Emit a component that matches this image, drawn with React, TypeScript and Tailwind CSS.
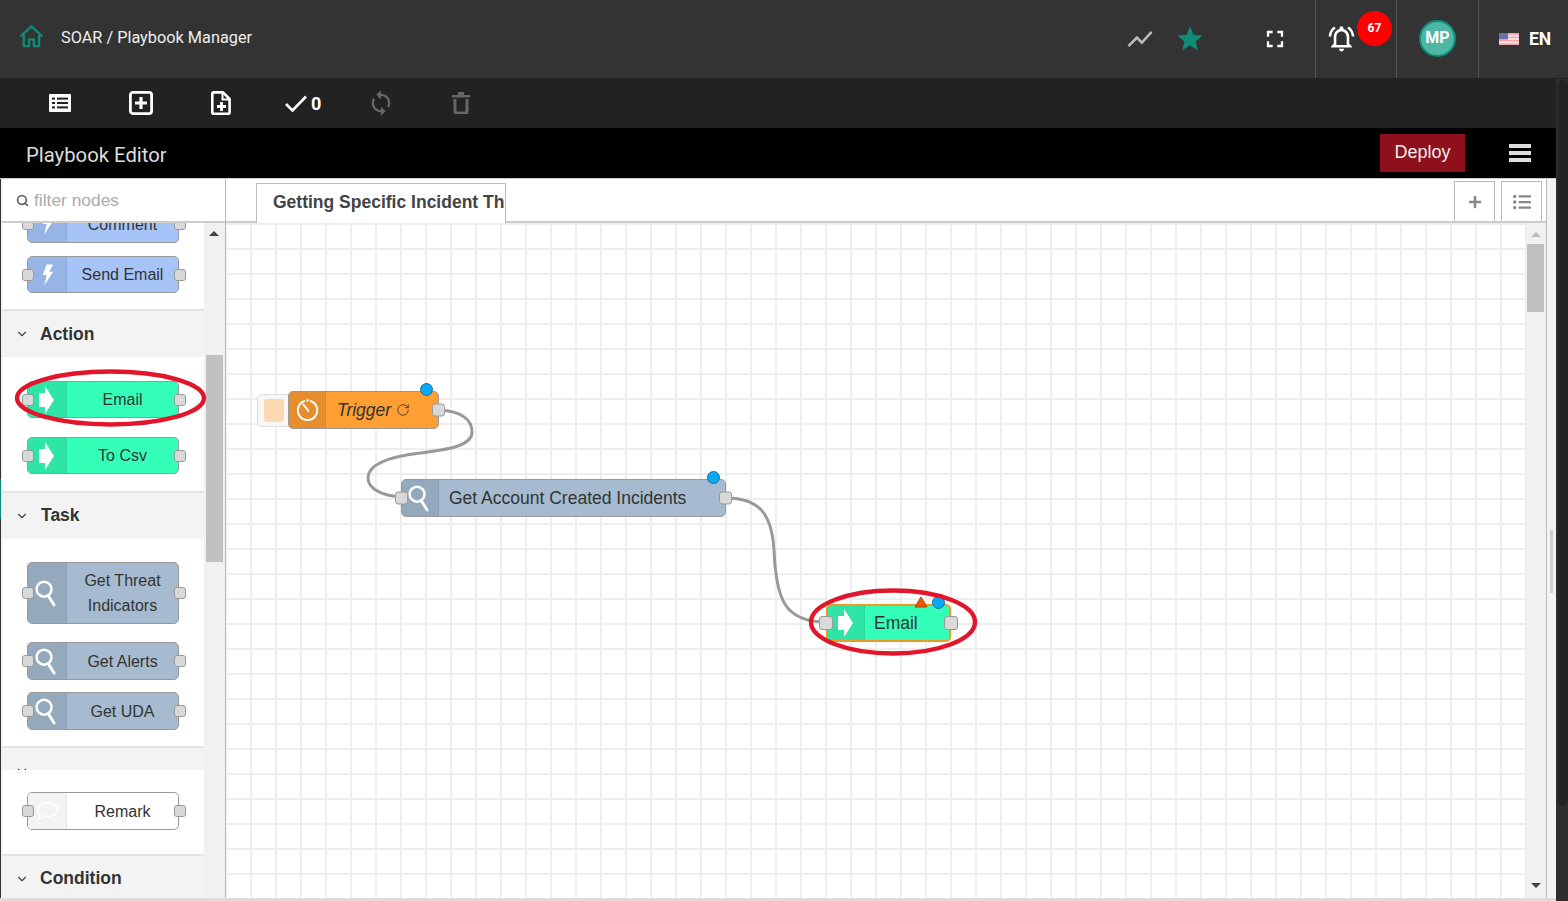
import React from "react";
import { MdShowChart, MdStar, MdFullscreen, MdOutlineNotificationsActive, MdSync } from "react-icons/md";
import { FaPlus, FaListUl } from "react-icons/fa";
import { LuChevronDown, LuSearch, LuRotateCw } from "react-icons/lu";

const Port = ({ className = "" }: { className?: string }) => (
  <span className={"absolute top-1/2 -translate-y-1/2 rounded-[3px] bg-[#d9d9d9] border border-[#999] " + className} />
);

const Bolt = () => (
  <svg viewBox="0 0 16 28" className="w-[13px] h-[24px]">
    <polygon points="7,1 15,1 10,10 15,10 4,27 7,14 2,14" fill="#fff" />
  </svg>
);
const Arrow = () => (
  <svg viewBox="0 0 15 28" className="w-[15px] h-[28px] -ml-[2px]">
    <polygon points="0,7 6,7 6,0 15,14 6,28 6,21 0,21" fill="#fff" />
  </svg>
);
const Lens = () => (
  <svg viewBox="0 0 22 28" className="w-[21px] h-[27px] -ml-[3px]" fill="none" stroke="#fff" strokeWidth="2.6" strokeLinecap="round">
    <circle cx="9.5" cy="9.5" r="7.8" />
    <line x1="14" y1="16.5" x2="20" y2="26" strokeWidth="3" />
  </svg>
);
const Clock = () => (
  <svg viewBox="0 0 26 26" className="w-[24px] h-[24px] ml-[1px]" fill="none" stroke="#fff" strokeWidth="2" strokeLinecap="round">
    <path d="M9 3.5a10.5 10.5 0 1 0 7 0" />
    <line x1="8" y1="7" x2="13.5" y2="14" />
    <circle cx="12.5" cy="2.5" r="1.4" fill="#fff" stroke="none" />
  </svg>
);
const Bubble = () => (
  <svg viewBox="0 0 26 22" className="w-[25px] h-[20px]" fill="none" stroke="#fff" strokeWidth="1.6">
    <path d="M13 2c6 0 11 3 11 7.5S19 17 13 17c-2 0-3 0-4-.5L3 20l2-5C3 14 2 12 2 9.5 2 5 7 2 13 2z" />
  </svg>
);

type PNodeProps = { label: React.ReactNode; bg: string; iconBg: string; icon: React.ReactNode; h?: string };
const PaletteNode = ({ label, bg, iconBg, icon, h = "h-[37px]" }: PNodeProps) => (
  <div className={"relative w-[152px] ml-[25px] rounded-[5px] border border-[#999] flex " + h + " " + bg}>
    <div className={"w-[39px] shrink-0 rounded-l-[4px] flex items-center justify-center border-r border-black/5 " + iconBg}>{icon}</div>
    <div className="flex-1 flex items-center justify-center text-center text-[16px] leading-[25px] text-[#333]">{label}</div>
    <Port className="w-[12px] h-[12px] left-[-6px]" />
    <Port className="w-[12px] h-[12px] right-[-8px]" />
  </div>
);

const SectionHead = ({ label, x = "pl-[38px]", lift = "-mt-[1px]" }: { label: string; x?: string; lift?: string }) => (
  <div className={"h-[48px] border-t-2 border-[#e4e4e4] bg-[#f3f3f3] flex items-center relative text-[#333] font-bold text-[17.5px] " + x}>
    <LuChevronDown className="absolute left-[13px] w-[14px] h-[14px] text-[#444]" />
    <span className={lift}>{label}</span>
  </div>
);

const BLUE = { bg: "bg-[#a6c4f7]", iconBg: "bg-[#97b4e6]" };
const GREEN = { bg: "bg-[#33ffb8]", iconBg: "bg-[#2fe5a6]" };
const STEEL = { bg: "bg-[#a6bbcf]", iconBg: "bg-[#95a9bd]" };

function Sidebar() {
  return (
    <div className="relative w-[224px] shrink-0 flex flex-col border-r border-[#bbb] bg-white font-['Liberation_Sans',sans-serif]">
      <div className="h-[44px] shrink-0 border-b-2 border-[#ccc] flex items-center pl-[14px] gap-[5px] text-[17.4px] text-[#aaa]">
        <LuSearch className="w-[13px] h-[13px] text-[#666]" strokeWidth={3.2} />
        filter nodes
      </div>
      <div className="relative flex-1 flex overflow-hidden">
        <div className="w-[202px] shrink-0 relative">
          <div className="-mt-[18px] h-[38px]">
            <PaletteNode label="Comment" {...BLUE} icon={<Bolt />} h="h-[38px]" />
          </div>
          <div className="pt-[13px] pb-[16px]">
            <PaletteNode label="Send Email" {...BLUE} icon={<Bolt />} />
          </div>
          <SectionHead label="Action" lift="mt-[1px]" />
          <div className="pt-[24px] pb-[17px] flex flex-col gap-[19px]">
            <PaletteNode label="Email" {...GREEN} icon={<Arrow />} />
            <PaletteNode label="To Csv" {...GREEN} icon={<Arrow />} />
          </div>
          <SectionHead label="Task" x="pl-[39px]" />
          <div className="pt-[23px] pb-[16px] flex flex-col">
            <PaletteNode label={<span>Get Threat<br />Indicators</span>} {...STEEL} icon={<Lens />} h="h-[62px]" />
            <div className="h-[18px]" />
            <PaletteNode label="Get Alerts" {...STEEL} icon={<Lens />} h="h-[38px]" />
            <div className="h-[12px]" />
            <PaletteNode label="Get UDA" {...STEEL} icon={<Lens />} h="h-[38px]" />
          </div>
          <div className="h-[24px] border-t-2 border-[#e4e4e4] bg-[#f3f3f3] relative overflow-hidden">
            <LuChevronDown className="absolute left-[13px] top-[16px] w-[14px] h-[14px] text-[#444]" />
          </div>
          <div className="pt-[22px] pb-[24px]">
            <PaletteNode label="Remark" bg="bg-white" iconBg="bg-[#f3f3f3]" icon={<Bubble />} h="h-[38px]" />
          </div>
          <SectionHead label="Condition" />
        </div>
        <div className="flex-1 bg-[#f1f1f1] relative">
          <span className="absolute left-[5px] top-[8px] w-0 h-0 border-x-[5px] border-x-transparent border-b-[5px] border-b-[#444]" />
          <span className="absolute left-[2px] top-[132px] w-[17px] h-[207px] bg-[#c1c1c1]" />
        </div>
        <svg viewBox="2 223 204 675" className="absolute left-0 top-0 w-[204px] h-[675px] overflow-visible pointer-events-none">
          <ellipse cx="110.5" cy="398" rx="93.5" ry="26.5" fill="none" stroke="#e2162a" strokeWidth="4.4" />
        </svg>
      </div>
    </div>
  );
}

type CNodeProps = { left: number; top: number; w: number; h: number; bg: string; iconBg: string; icon: React.ReactNode; children: React.ReactNode; selected?: boolean; noInput?: boolean };
const CanvasNode = ({ left, top, w, h, bg, iconBg, icon, children, selected, noInput }: CNodeProps) => (
  <div className={"absolute rounded-[5px] flex " + bg + " " + (selected ? "border-2 border-[#ee9a20]" : "border border-[#999]")} style={{ left, top, width: w, height: h }}>
    <div className={"w-[37px] shrink-0 rounded-l-[4px] flex items-center justify-center border-r border-black/5 " + iconBg}>{icon}</div>
    <div className={"flex-1 flex items-center text-[17.5px] text-[#333] whitespace-nowrap " + (selected ? "pl-[9px]" : "pl-[10px]")}>{children}</div>
    {!noInput && <Port className={selected ? "w-[14px] h-[14px] left-[-9px]" : "w-[13px] h-[13px] left-[-7px]"} />}
    <Port className={selected ? "w-[14px] h-[14px] right-[-9px]" : "w-[13px] h-[13px] right-[-7px]"} />
  </div>
);

function Canvas() {
  return (
    <div className="relative flex-1 overflow-hidden bg-white bg-[linear-gradient(#eee_2px,transparent_2px),linear-gradient(90deg,#eee_2px,transparent_2px)] bg-size-[25px_25px] bg-position-[24px_25px]">
      <svg viewBox="226 223 1300 678" className="absolute left-0 top-0 w-[1300px] h-[678px] pointer-events-none">
        <g fill="none" stroke="#999" strokeWidth="3">
          <path d="M439 410C462 411 472 420 472 432C472 448 440 450 420 453C395 456 368 462 368 478C368 490 385 496 401 497" />
          <path d="M726 498C760 498 772 515 774 550C776 600 785 622 826 622" />
        </g>
      </svg>
      <div className="absolute left-[31px] top-[171px] w-[36px] h-[33px] rounded-[5px] border border-[#ddd] bg-[#f7f7f7] flex items-center pl-[6px]">
        <span className="w-[20px] h-[23px] rounded-[3px] bg-[#fcd9b0]" />
      </div>
      <CanvasNode left={62} top={168} w={151} h={38} bg="bg-[#ff9e33]" iconBg="bg-[#e68e2e]" icon={<Clock />} noInput>
        <span className="italic flex items-center gap-[5px] pl-[1px]">Trigger <LuRotateCw className="w-[14px] h-[14px] text-[#333]" strokeWidth={1.4} /></span>
      </CanvasNode>
      <CanvasNode left={175} top={256} w={325} h={38} {...STEEL} icon={<Lens />}>
        Get Account Created Incidents
      </CanvasNode>
      <CanvasNode left={600} top={381} w={125} h={38} {...GREEN} icon={<Arrow />} selected>
        Email
      </CanvasNode>
      <span className="absolute left-[194px] top-[160px] w-[13px] h-[13px] rounded-full bg-[#0aa9f5] border border-[#1a6fa0]" />
      <span className="absolute left-[481px] top-[248px] w-[13px] h-[13px] rounded-full bg-[#0aa9f5] border border-[#1a6fa0]" />
      <span className="absolute left-[706px] top-[373px] w-[13px] h-[13px] rounded-full bg-[#0aa9f5] border border-[#1a6fa0]" />
      <svg viewBox="0 0 14 12" className="absolute left-[688px] top-[373px] w-[14px] h-[12px]">
        <polygon points="7,1 13,11 1,11" fill="#f05a00" stroke="#a8400a" strokeWidth="1" />
      </svg>
      <svg viewBox="226 223 1300 678" className="absolute left-0 top-0 w-[1300px] h-[678px] pointer-events-none">
        <ellipse cx="893" cy="622" rx="82" ry="31.5" fill="none" stroke="#e2162a" strokeWidth="4.4" />
      </svg>
      <div className="absolute right-0 top-0 bottom-0 w-[20px] bg-[#f1f1f1]">
        <span className="absolute left-[5px] top-[9px] w-0 h-0 border-x-[5px] border-x-transparent border-b-[5px] border-b-[#bbb]" />
        <span className="absolute left-[1px] top-[21px] w-[17px] h-[68px] bg-[#c1c1c1]" />
        <span className="absolute left-[5px] top-[660px] w-0 h-0 border-x-[5px] border-x-transparent border-t-[5px] border-t-[#444]" />
      </div>
    </div>
  );
}

const Flag = () => (
  <svg viewBox="0 0 20 12" className="w-[20px] h-[12px]">
    <rect width="20" height="12" fill="#f4a6ad" />
    <rect y="2" width="20" height="1.6" fill="#fbe9ea" />
    <rect y="5.2" width="20" height="1.6" fill="#fbe9ea" />
    <rect y="8.6" width="20" height="1.6" fill="#fbe9ea" />
    <rect width="9" height="6.4" fill="#6a6fb0" />
  </svg>
);

const Home = () => (
  <svg viewBox="0 0 26 24" className="w-[25px] h-[23px]" fill="none" stroke="#0f8b78" strokeWidth="2.4" strokeLinejoin="round">
    <path d="M1.5 12L13 1.5 24.5 12" />
    <path d="M5 10v12h5.5v-7h5v7H21V10" />
  </svg>
);

const ListIcon = () => (
  <svg viewBox="0 0 22 18" className="w-[22px] h-[18px] ml-[49px]">
    <rect width="22" height="18" rx="1" fill="#fff" />
    <g fill="#222">
      <rect x="3" y="3.6" width="3" height="2" />
      <rect x="8" y="3.6" width="11" height="2" />
      <rect x="3" y="8" width="3" height="2" />
      <rect x="8" y="8" width="11" height="2" />
      <rect x="3" y="12.4" width="3" height="2" />
      <rect x="8" y="12.4" width="11" height="2" />
    </g>
  </svg>
);
const AddBoxIcon = () => (
  <svg viewBox="0 0 24 24" className="w-[24px] h-[24px] ml-[58px]">
    <rect x="1.4" y="1.4" width="21.2" height="21.2" rx="2.5" fill="none" stroke="#fff" strokeWidth="2.8" />
    <path d="M12 6v12M6 12h12" stroke="#fff" strokeWidth="3.2" />
  </svg>
);
const FileAddIcon = () => (
  <svg viewBox="0 0 20 24" className="w-[20px] h-[24px] ml-[58px]">
    <path d="M2.5 1.4H12l6.6 6.6v13.6a1.2 1.2 0 0 1-1.2 1.2H2.5a1.2 1.2 0 0 1-1.2-1.2V2.6a1.2 1.2 0 0 1 1.2-1.2z" fill="none" stroke="#fff" strokeWidth="2.6" strokeLinejoin="round" />
    <path d="M11.5 1.5V8.5H18.5" fill="none" stroke="#fff" strokeWidth="2" />
    <path d="M10.5 11v9M6 15.5h9" stroke="#fff" strokeWidth="2.8" />
  </svg>
);
const CheckIcon = () => (
  <svg viewBox="0 0 22 17" className="w-[22px] h-[17px] ml-[54px]" fill="none" stroke="#fff" strokeWidth="2.6">
    <path d="M1 9l6.5 6.5L21 1.5" />
  </svg>
);
const TrashIcon = () => (
  <svg viewBox="0 0 18 22" className="w-[18px] h-[22px] ml-[57px]">
    <path d="M0 3h18v2.6H0zM6 0h6v3H6z" fill="#666" />
    <path d="M3 7v13a1 1 0 0 0 1 1h10a1 1 0 0 0 1-1V7" fill="none" stroke="#666" strokeWidth="3" />
  </svg>
);

export default function App() {
  return (
    <div className="w-[1568px] h-[901px] overflow-hidden flex flex-col bg-[#2e2e2e] font-['Roboto',sans-serif]">
      <header className="h-[79px] shrink-0 bg-[#333] border-b border-[#222] flex items-stretch text-white">
        <div className="flex items-center pl-[19px] -mt-[5px]">
          <Home />
          <span className="ml-[17px] text-[16.3px] text-[#eee] pt-[3px]">SOAR / Playbook Manager</span>
        </div>
        <div className="flex-1" />
        <div className="flex items-center -mt-[1px]">
          <MdShowChart className="w-[30px] h-[30px] text-[#bbb] mt-[1px]" />
          <MdStar className="w-[30px] h-[30px] text-[#0f8b78] ml-[20px]" />
          <MdFullscreen className="w-[28px] h-[28px] text-white ml-[56px] mr-[26px]" />
        </div>
        <div className="w-[81px] border-l border-[#555] relative flex items-center">
          <MdOutlineNotificationsActive className="w-[31px] h-[31px] ml-[10px] mt-[-1px] text-white" />
          <span className="absolute left-[41px] top-[11px] w-[35px] h-[35px] rounded-full bg-[#ff0000] text-white text-[12px] font-bold flex items-center justify-center pb-[2px]">67</span>
        </div>
        <div className="w-[82px] border-l border-[#555] flex items-center justify-center">
          <span className="w-[37px] h-[37px] rounded-full bg-[#4db6a5] border-2 border-[#0f8b78] text-white font-bold text-[16px] flex items-center justify-center -mt-[2px]">MP</span>
        </div>
        <div className="w-[90px] border-l border-[#555] flex items-center pl-[20px] gap-[10px]">
          <Flag />
          <span className="font-bold text-[17.5px]">EN</span>
        </div>
      </header>
      <div className="flex-1 flex min-h-0">
        <div className="w-[1556px] shrink-0 flex flex-col min-h-0">
          <div className="h-[49px] shrink-0 bg-[#222] flex items-center pb-[1px] text-white">
            <ListIcon />
            <AddBoxIcon />
            <FileAddIcon />
            <CheckIcon />
            <span className="ml-[4px] text-[18px] font-bold">0</span>
            <MdSync className="w-[28px] h-[28px] ml-[46px] text-[#666]" />
            <TrashIcon />
          </div>
          <div className="h-[50px] shrink-0 bg-black flex items-center text-white">
            <span className="ml-[26px] pt-[5px] text-[20.3px] text-[#ddd]">Playbook Editor</span>
            <div className="flex-1" />
            <button className="w-[85px] h-[38px] bg-[#8d101c] text-[18px] text-[#eee] font-['Liberation_Sans',sans-serif] -mt-[1px]">Deploy</button>
            <div className="ml-[44px] mr-[25px] w-[22px] flex flex-col gap-[3.5px]">
              <span className="h-[3.7px] bg-[#ddd]" />
              <span className="h-[3.7px] bg-[#ddd]" />
              <span className="h-[3.7px] bg-[#ddd]" />
            </div>
          </div>
          <div className="flex-1 flex min-h-0 bg-white border-t border-[#ccc] border-b-[3px] border-b-[#ddd]">
            <div className="w-[1px] flex flex-col bg-[#333]">
              <div className="h-[300px]" />
              <div className="h-[40px] bg-[#0f8b78]" />
            </div>
            <div className="w-[1px] bg-[#eee]" />
            <Sidebar />
            <div className="flex-1 min-w-0 flex flex-col border-r border-[#bbb] font-['Liberation_Sans',sans-serif]">
              <div className="h-[44px] shrink-0 border-b-2 border-[#ccc] flex items-end bg-white relative">
                <div className="ml-[30px] w-[250px] h-[40px] -mb-[2px] bg-white border border-b-0 border-[#bbb] overflow-hidden whitespace-nowrap pl-[16px] pt-[5px] text-[17.5px] font-bold text-[#444] z-10">
                  Getting Specific Incident Th
                </div>
                <div className="flex-1" />
                <div className="w-[41px] h-[40px] bg-white border border-b-0 border-[#bbb] flex items-center justify-center text-[#888]"><FaPlus className="w-[14px] h-[14px]" /></div>
                <div className="w-[41px] h-[40px] ml-[6px] mr-[4px] bg-white border border-b-0 border-[#bbb] flex items-center justify-center text-[#888]"><FaListUl className="w-[18px] h-[18px]" /></div>
              </div>
              <Canvas />
            </div>
            <div className="w-[9px] bg-[#f3f3f3] flex justify-center items-start">
              <span className="w-[3px] h-[63px] mt-[351px] bg-[#d0d0d0]" />
            </div>
          </div>
        </div>
        <div className="flex-1 relative bg-[#2e2e2e]">
          <span className="absolute left-[2px] top-[1px] right-0 h-[726px] rounded-[6px] bg-[#242424]" />
        </div>
      </div>
    </div>
  );
}
